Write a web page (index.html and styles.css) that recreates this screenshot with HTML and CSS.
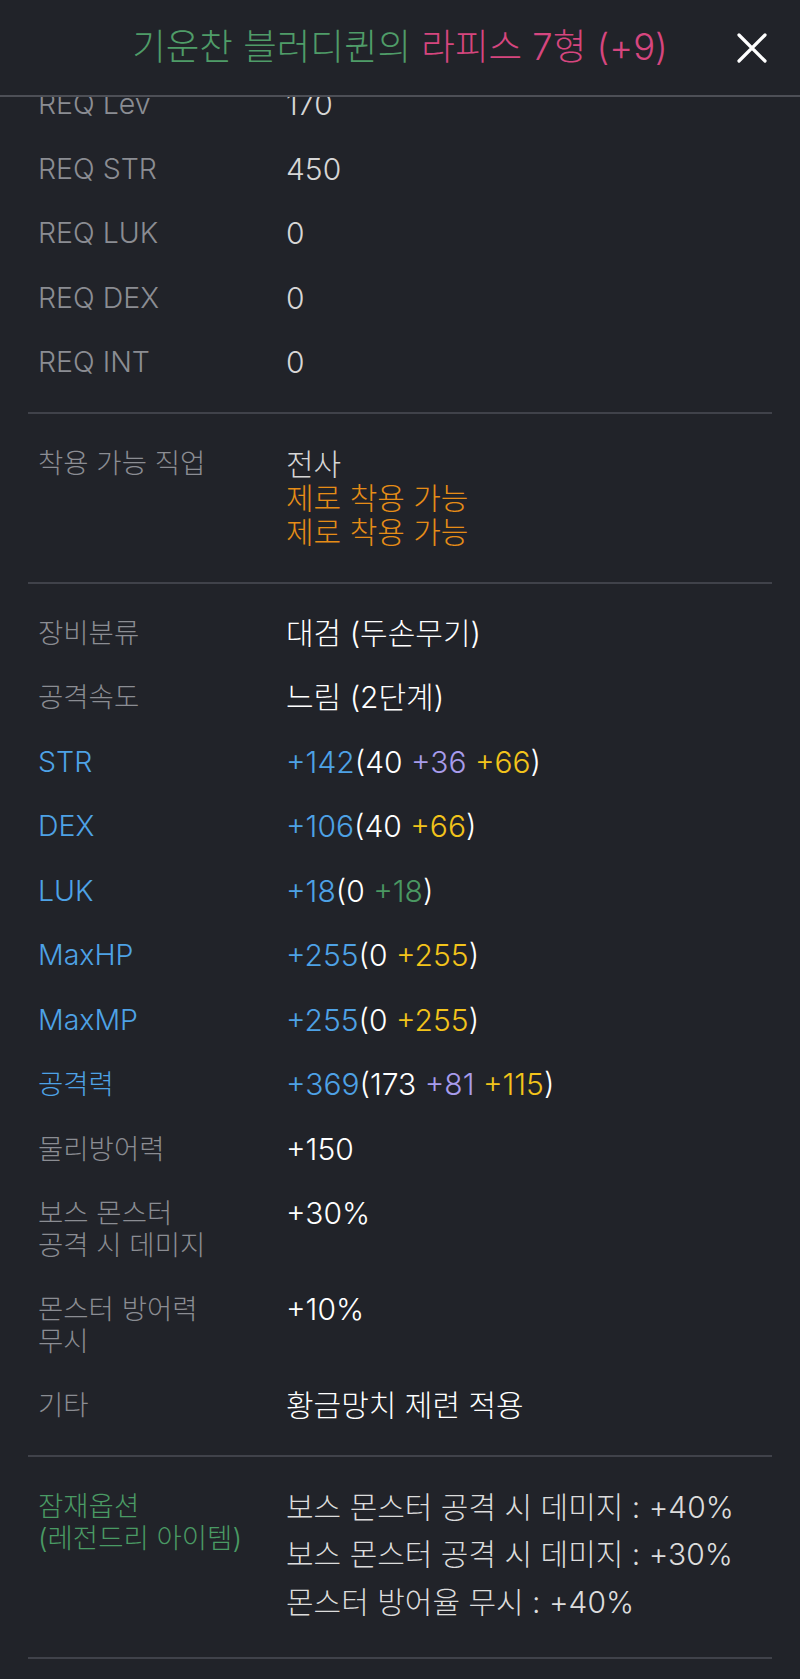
FILE: index.html
```html
<!DOCTYPE html>
<html lang="ko">
<head>
<meta charset="utf-8">
<title>아이템 정보</title>
<link rel="stylesheet" href="styles.css">
</head>
<body>
<header class="header">
  <h1 class="title"><span class="g">기운찬 블러디퀸의</span> <span class="p">라피스 7형 (+9)</span></h1>
  <button class="close" aria-label="닫기">
    <svg viewBox="0 0 30 30" width="30" height="30"><path d="M2 2 L28 28 M28 2 L2 28" stroke="#ffffff" stroke-width="3.2" stroke-linecap="round" fill="none"/></svg>
  </button>
</header>
<main class="main">
  <div class="scroll">
    <section class="section">
      <div class="row"><div class="lbl en">REQ Lev</div><div class="val dim">170</div></div>
      <div class="row"><div class="lbl en">REQ STR</div><div class="val dim">450</div></div>
      <div class="row"><div class="lbl en">REQ LUK</div><div class="val dim">0</div></div>
      <div class="row"><div class="lbl en">REQ DEX</div><div class="val dim">0</div></div>
      <div class="row"><div class="lbl en">REQ INT</div><div class="val dim">0</div></div>
    </section>
    <section class="section">
      <div class="row"><div class="lbl">착용 가능 직업</div>
        <div class="val jobs"><div class="dim">전사</div><div class="o">제로 착용 가능</div><div class="o">제로 착용 가능</div></div>
      </div>
    </section>
    <section class="section">
      <div class="row"><div class="lbl">장비분류</div><div class="val">대검 (두손무기)</div></div>
      <div class="row"><div class="lbl">공격속도</div><div class="val">느림 (2단계)</div></div>
      <div class="row"><div class="lbl en b">STR</div><div class="val"><span class="b">+142</span>(40 <span class="pu">+36</span> <span class="y">+66</span>)</div></div>
      <div class="row"><div class="lbl en b">DEX</div><div class="val"><span class="b">+106</span>(40 <span class="y">+66</span>)</div></div>
      <div class="row"><div class="lbl en b">LUK</div><div class="val"><span class="b">+18</span>(0 <span class="gr">+18</span>)</div></div>
      <div class="row"><div class="lbl en b">MaxHP</div><div class="val"><span class="b">+255</span>(0 <span class="y">+255</span>)</div></div>
      <div class="row"><div class="lbl en b">MaxMP</div><div class="val"><span class="b">+255</span>(0 <span class="y">+255</span>)</div></div>
      <div class="row"><div class="lbl b">공격력</div><div class="val"><span class="b">+369</span>(173 <span class="pu">+81</span> <span class="y">+115</span>)</div></div>
      <div class="row"><div class="lbl">물리방어력</div><div class="val">+150</div></div>
      <div class="row"><div class="lbl multi">보스 몬스터<br>공격 시 데미지</div><div class="val">+30%</div></div>
      <div class="row"><div class="lbl multi">몬스터 방어력<br>무시</div><div class="val">+10%</div></div>
      <div class="row"><div class="lbl">기타</div><div class="val">황금망치 제련 적용</div></div>
    </section>
    <section class="section">
      <div class="row pot-row"><div class="lbl multi gr2">잠재옵션<br>(레전드리 아이템)</div>
        <div class="val pot"><div>보스 몬스터 공격 시 데미지 : +40%</div><div>보스 몬스터 공격 시 데미지 : +30%</div><div>몬스터 방어율 무시 : +40%</div></div>
      </div>
    </section>
  </div>
</main>
</body>
</html>
```

FILE: styles.css
```css
* { box-sizing: border-box; margin: 0; padding: 0; }
html, body { background: #212329; }
body {
  width: 800px;
  height: 1679px;
  overflow: hidden;
  font-family: "Inter", "Noto Sans CJK KR", sans-serif;
  font-weight: 300;
  color: #ffffff;
}
.header {
  height: 97px;
  border-bottom: 2px solid #4d4f56;
  display: grid;
  grid-template-columns: 1fr auto 1fr;
  align-items: center;
}
.title {
  grid-column: 2;
  font-size: 36.5px;
  line-height: 40px;
  font-weight: 300;
  white-space: nowrap;
  padding-bottom: 2px;
}
.title .g { color: #4f9c68; }
.title .p { color: #d6467f; }
.close {
  grid-column: 3;
  justify-self: end;
  margin-right: 33px;
  width: 30px;
  height: 30px;
  background: none;
  border: 0;
  display: flex;
}
.main { height: 1582px; overflow: hidden; }
.scroll { margin-top: -42px; padding: 0 28px; }
.section { padding: 17px 0; border-bottom: 2px solid #40424a; }
.row {
  display: grid;
  grid-template-columns: 248px 1fr;
  padding: 16px 10px;
}
.row.pot-row { padding-bottom: 14px; }
.lbl {
  font-size: 27.5px;
  line-height: 32.5px;
  color: #8b8d93;
  white-space: nowrap;
}
.lbl.en { font-size: 28.5px; }
.lbl.multi { line-height: 32px; }
.val {
  font-size: 30px;
  line-height: 32.5px;
  color: #ffffff;
  white-space: nowrap;
}
.val.jobs { line-height: 34px; }
.val.pot { font-size: 30px; line-height: 47.5px; color: #dcdcdc; margin-top: -6px; }
.dim { color: #d6d6d6; }
.o { color: #e68d17; }
.b { color: #4ea2e6; }
.pu { color: #a89cec; }
.y { color: #f3c41b; }
.gr { color: #4a9862; }
.gr2 { color: #4a9a64; }
```
